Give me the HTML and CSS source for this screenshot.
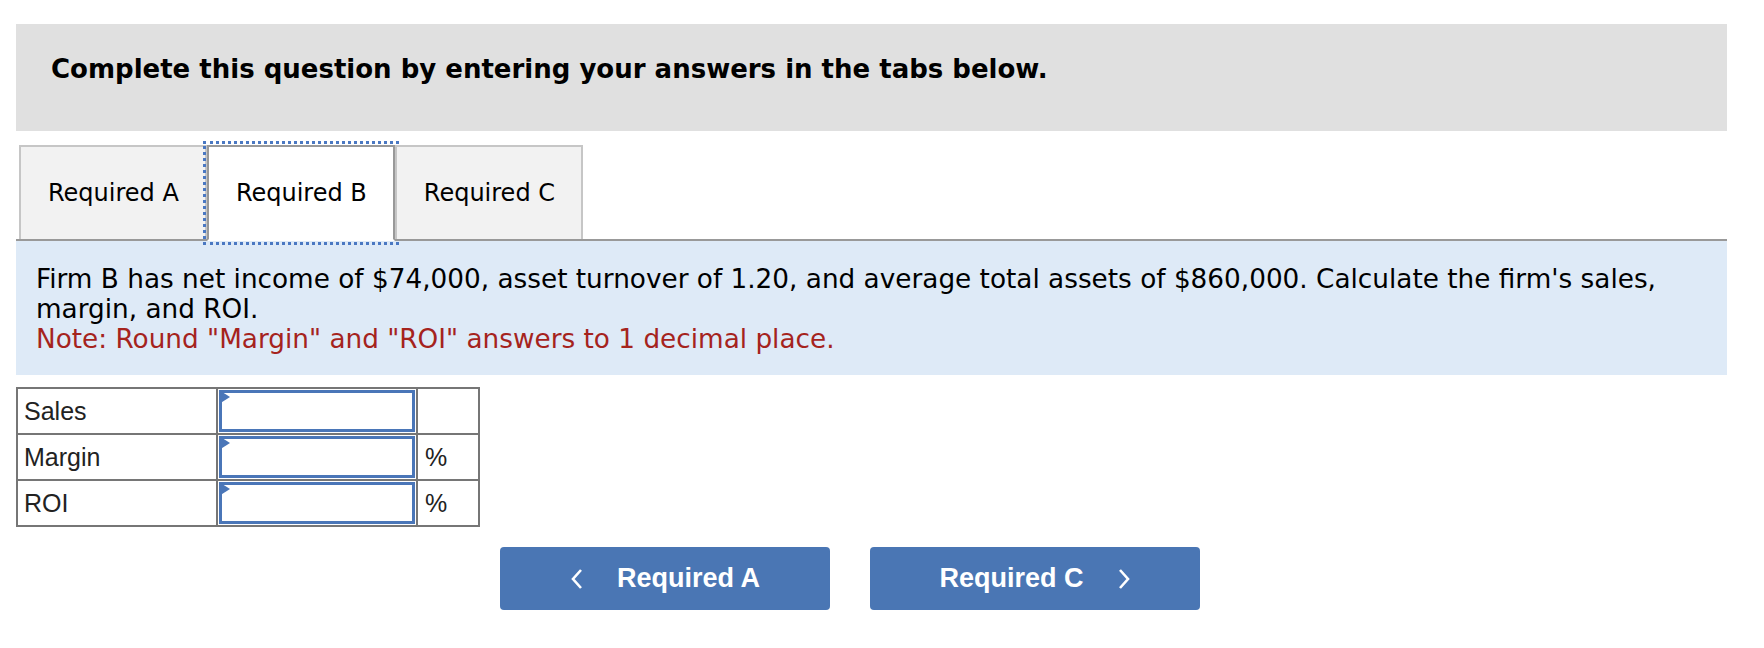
FILE: index.html
```html
<!DOCTYPE html>
<html lang="en">
<head>
    <meta charset="UTF-8">
    <title>Required B</title>
    <link rel="stylesheet" href="styles.css">
</head>
<body>
<div class="page">
    <div class="instructions">
        Complete this question by entering your answers in the tabs below.
    </div>

    <ul class="tabs">
        <li class="tab">Required A</li>
        <li class="tab active-tab">Required B</li>
        <li class="tab">Required C</li>
    </ul>

    <div class="question">
        <p>Firm B has net income of $74,000, asset turnover of 1.20, and average total assets of $860,000. Calculate the firm's sales, margin, and ROI.</p>
        <p class="note">Note: Round "Margin" and "ROI" answers to 1 decimal place.</p>
    </div>

    <table class="answers">
        <tr>
            <td class="label">Sales</td>
            <td class="field"><div class="field-box"><input type="text"></div></td>
            <td class="unit"></td>
        </tr>
        <tr>
            <td class="label">Margin</td>
            <td class="field"><div class="field-box"><input type="text"></div></td>
            <td class="unit">%</td>
        </tr>
        <tr>
            <td class="label">ROI</td>
            <td class="field"><div class="field-box"><input type="text"></div></td>
            <td class="unit">%</td>
        </tr>
    </table>

    <div class="nav">
        <button class="nav-btn">
            <svg width="14" height="22" viewBox="0 0 14 22"><polyline points="11,2 3,11 11,20" fill="none" stroke="#fff" stroke-width="2.6"/></svg>
            <span>Required A</span>
        </button>
        <button class="nav-btn">
            <span>Required C</span>
            <svg width="14" height="22" viewBox="0 0 14 22"><polyline points="3,2 11,11 3,20" fill="none" stroke="#fff" stroke-width="2.6"/></svg>
        </button>
    </div>
</div>
</body>
</html>
```

FILE: styles.css
```css
/*reset*/
* {
    margin: 0;
    padding: 0;
    box-sizing: border-box;
}

body {
    background: #fff;
    font-family: "DejaVu Sans", Verdana, sans-serif;
    color: #000;
}

li {
    list-style: none;
}

.page {
    width: 1711px;
    margin: 24px 0 0 16px;
}

.instructions {
    background-color: #e0e0e0;
    font-size: 26px;
    font-weight: bold;
    line-height: 30px;
    padding: 30px 35px 47px;
}

/*tabs*/
.tabs {
    display: flex;
    align-items: flex-end;
    margin-top: 14px;
    padding-left: 3px;
    border-bottom: 2px solid #999;
}

.tab {
    height: 94px;
    padding: 0 26px 0 27px;
    display: flex;
    align-items: center;
    font-size: 24px;
    background-color: #f2f2f2;
    border: 2px solid #c6c6c6;
    border-bottom: none;
}

.active-tab {
    height: 96px;
    margin-bottom: -2px;
    background-color: #fff;
    border-color: #999;
    border-bottom: 2px solid #fff;
    outline: 3px dotted #4a78c2;
    outline-offset: 1px;
}

/*question text*/
.question {
    background-color: #deeaf7;
    padding: 23px 20px 21px;
    font-size: 26.3px;
    line-height: 30px;
}

.note {
    color: #a5231d;
}

/*answer table*/
.answers {
    margin-top: 12px;
    border-collapse: collapse;
    font-family: "Liberation Sans", Arial, sans-serif;
    font-size: 25px;
    color: #222;
}

.answers td {
    border: 2px solid #767676;
    height: 46px;
}

.label {
    width: 200px;
    padding-left: 6px;
}

.field {
    width: 200px;
    padding: 1px;
}

.unit {
    width: 62px;
    padding-left: 7px;
}

.field-box {
    position: relative;
}

.field-box input {
    display: block;
    width: 100%;
    height: 42px;
    border: 3px solid #4a76b8;
    outline: none;
}

.field-box::before {
    content: "";
    position: absolute;
    top: 0;
    left: 0;
    border-left: 11px solid #4a76b8;
    border-top: 7px solid transparent;
    border-bottom: 7px solid transparent;
}

/*prev / next*/
.nav {
    display: flex;
    gap: 40px;
    margin-top: 20px;
    padding-left: 484px;
}

.nav-btn {
    width: 330px;
    height: 63px;
    display: flex;
    align-items: center;
    justify-content: center;
    gap: 33px;
    background-color: #4a76b4;
    color: #fff;
    border: none;
    border-radius: 4px;
    font-family: "Liberation Sans", Arial, sans-serif;
    font-size: 27px;
    font-weight: bold;
    cursor: pointer;
}
```
